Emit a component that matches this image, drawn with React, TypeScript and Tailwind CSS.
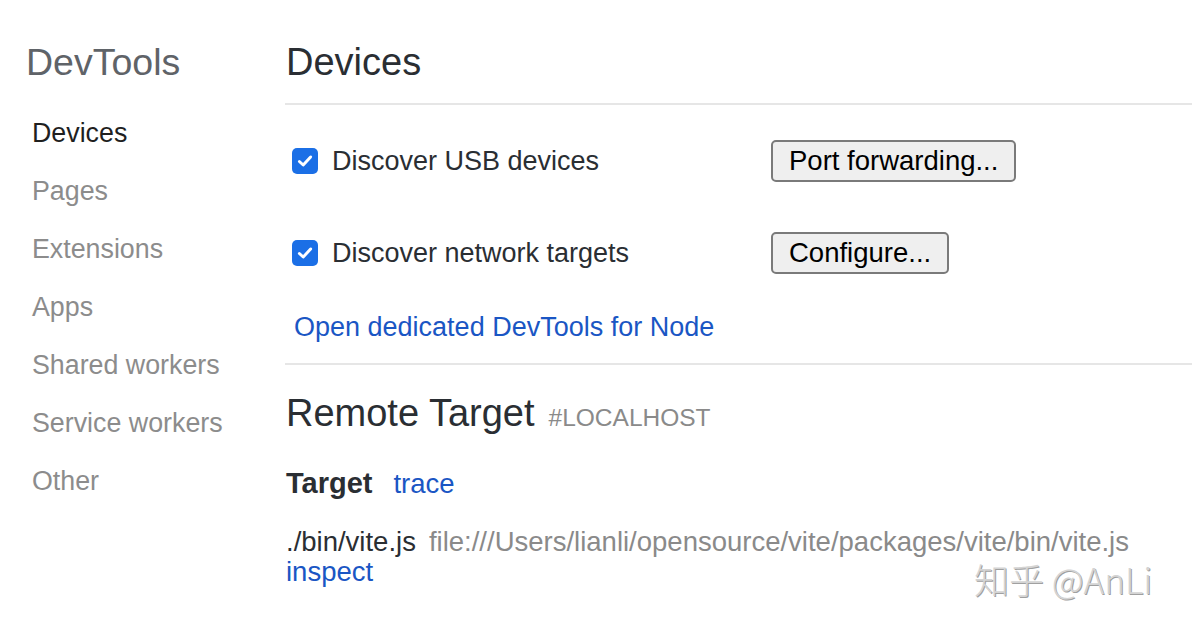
import React from "react";

const font = { fontFamily: '"Liberation Sans", Arial, "Noto Sans CJK SC", sans-serif' };

function Check() {
  return (
    <span className="flex h-[26px] w-[26px] shrink-0 items-center justify-center rounded-[5px] bg-[#1b6fe6]">
      <svg width="18" height="18" viewBox="0 0 16 16" fill="none">
        <path d="M3 8.4 L6.4 11.6 L13 4.4" stroke="white" strokeWidth="2.6" strokeLinecap="round" strokeLinejoin="round" />
      </svg>
    </span>
  );
}

function Btn({ children }: { children: React.ReactNode }) {
  return (
    <button className="h-[42px] rounded-[5px] border-2 border-[#7a7a7a] bg-[#efefef] px-[16px] text-[27.5px] leading-none text-black">
      {children}
    </button>
  );
}

export default function App() {
  const items = ["Devices", "Pages", "Extensions", "Apps", "Shared workers", "Service workers", "Other"];
  return (
    <div className="relative flex h-[624px] w-[1192px] overflow-hidden bg-white" style={font}>
      <aside className="flex w-[285px] shrink-0 flex-col pt-[40px]">
        <div className="pl-[26px] text-[37.5px] leading-[44px] text-[#5f6368]">DevTools</div>
        <div className="mt-[20px] flex flex-col">
          {items.map((it, i) => (
            <div
              key={it}
              className={
                "pl-[32px] text-[26.8px] leading-[58px] " + (i === 0 ? "text-[#1f1f1f]" : "text-[#8c8c8c]")
              }
            >
              {it}
            </div>
          ))}
        </div>
      </aside>
      <main className="flex flex-1 flex-col pt-[40px] text-[#2a2e33]">
        <h1 className="pl-[1px] text-[38px] leading-[44px]">Devices</h1>
        <div className="mt-[19px] h-[2px] bg-[#e6e6e6]" />
        <div className="mt-[35px] flex h-[42px] items-center pl-[7px]">
          <div className="flex w-[479px] items-center gap-[14px]">
            <Check />
            <span className="text-[27px]">Discover USB devices</span>
          </div>
          <Btn>Port forwarding...</Btn>
        </div>
        <div className="mt-[50px] flex h-[42px] items-center pl-[7px]">
          <div className="flex w-[479px] items-center gap-[14px]">
            <Check />
            <span className="text-[27px]">Discover network targets</span>
          </div>
          <Btn>Configure...</Btn>
        </div>
        <div className="mt-[37px] pl-[9px] text-[27px] leading-[32px] text-[#1a56c4]">
          Open dedicated DevTools for Node
        </div>
        <div className="mt-[20px] h-[2px] bg-[#e6e6e6]" />
        <div className="mt-[26px] flex items-baseline gap-[14px] pl-[1px]">
          <span className="text-[38px] leading-[44px]">Remote Target</span>
          <span className="text-[24.5px] text-[#8a8a8a]">#LOCALHOST</span>
        </div>
        <div className="mt-[30px] flex items-baseline gap-[21px] pl-[1px] leading-[32px]">
          <span className="text-[29px] font-bold">Target</span>
          <span className="text-[27.5px] text-[#1a56c4]">trace</span>
        </div>
        <div className="mt-[27px] flex items-baseline gap-[13px] pl-[1px] leading-[30px]">
          <span className="text-[27.5px] text-[#2a2e33]">./bin/vite.js</span>
          <span className="text-[27.5px] text-[#8a8a8a]">file:///Users/lianli/opensource/vite/packages/vite/bin/vite.js</span>
        </div>
        <div className="pl-[1px] text-[27.5px] leading-[30px] text-[#1a56c4]">inspect</div>
      </main>
      <div
        className="absolute left-[974px] top-[561px] text-[35px] leading-[36px] text-[#d4d4d4] [text-shadow:1px_1px_0_#a0a0a0]"
        style={{ fontFamily: '"Noto Sans CJK SC", "Liberation Sans", sans-serif', fontWeight: 300 }}
      >
        知乎 @AnLi
      </div>
    </div>
  );
}
